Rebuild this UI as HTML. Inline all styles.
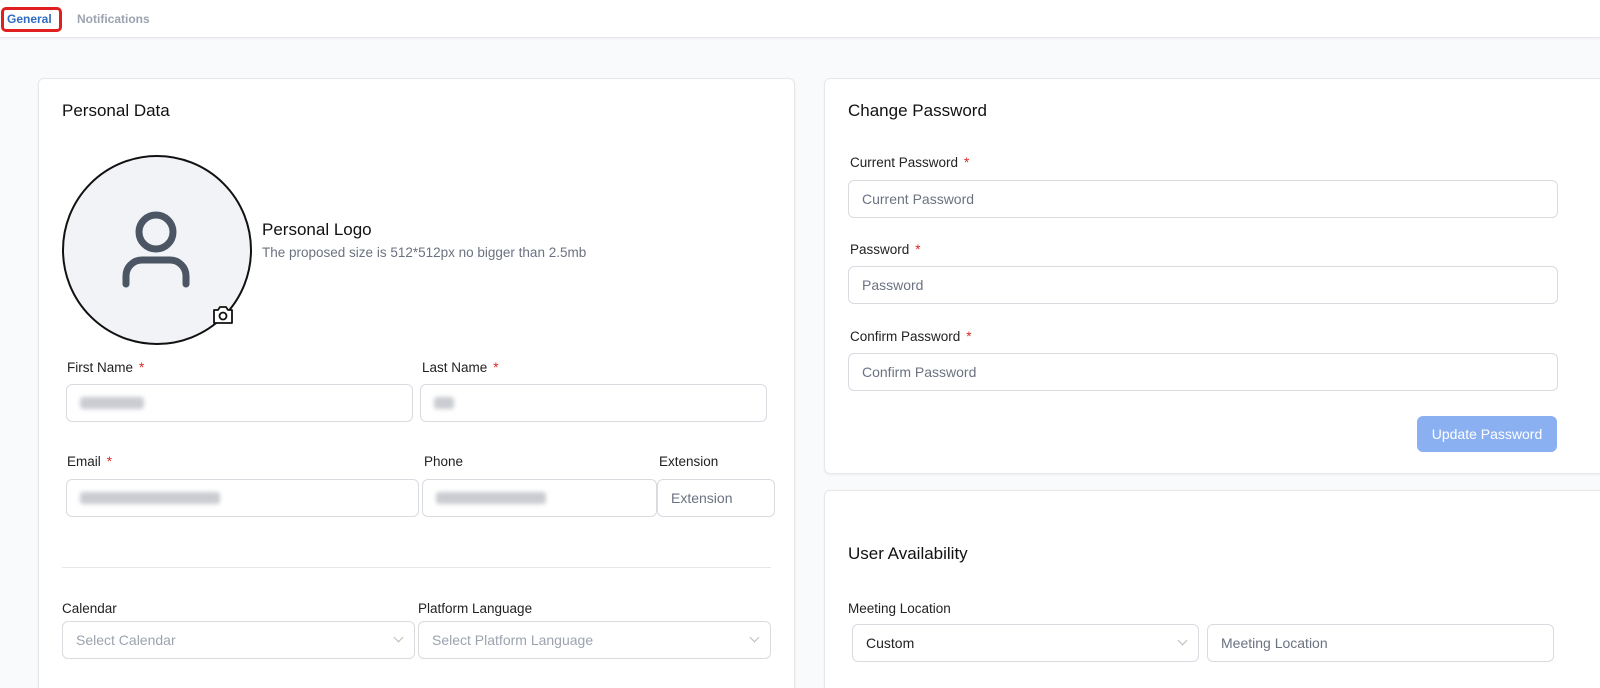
<!DOCTYPE html>
<html style="overflow:hidden;height:688px"><head><style>
*{box-sizing:border-box;margin:0;padding:0}
body{width:1600px;height:688px;overflow:hidden;background:#f9fafb;font-family:"Liberation Sans",sans-serif;position:relative;color:#111}
.a{position:absolute}
.hdr{left:0;top:0;width:1600px;height:38px;background:#fff;border-bottom:1px solid #e5e7eb;box-shadow:0 1px 2px rgba(0,0,0,.05)}
.card{background:#fff;border:1px solid #e5e7eb;border-radius:6px;box-shadow:0 1px 2px rgba(0,0,0,.05)}
.inp{border:1px solid #d8dbe0;border-radius:6px;background:#fff;font-size:14px;color:#6b7280;padding-left:13px;display:flex;align-items:center}
.lbl{font-size:13.5px;color:#222}
.st{color:#dc2626;margin-left:6px}
.t{font-size:17px;color:#111}
.blur{background:#c9ccd1;filter:blur(2px);height:12px;border-radius:3px}
.ph{color:#9ca3af}
.chev{position:absolute;right:12px;top:12px;width:7px;height:7px;border-right:1px solid #bbb;border-bottom:1px solid #bbb;transform:rotate(45deg)}
</style></head><body>
<div class="a hdr"></div>
<div class="a" style="left:1px;top:7px;width:61px;height:25px;border:3px solid #e02020;border-radius:5px"></div>
<div class="a" style="left:7px;top:12px;font-size:12px;font-weight:bold;color:#2f6cc0">General</div>
<div class="a" style="left:77px;top:12px;font-size:12px;font-weight:bold;color:#9ca3af">Notifications</div>

<div class="a card" style="left:38px;top:78px;width:757px;height:620px;border-bottom:none"></div>
<div class="a t" style="left:62px;top:101px">Personal Data</div>
<div class="a" style="left:62px;top:155px;width:190px;height:190px;border:2px solid #111;border-radius:50%;background:#f2f3f6"></div>
<svg class="a" style="left:118px;top:208px" width="76" height="82" viewBox="0 0 76 82"><circle cx="38" cy="24" r="17" fill="none" stroke="#4b5563" stroke-width="7"/><path d="M8 76V68a16 16 0 0 1 16-16h28a16 16 0 0 1 16 16v8" fill="none" stroke="#4b5563" stroke-width="7" stroke-linecap="round"/></svg>
<svg class="a" style="left:211px;top:304px" width="24" height="22" viewBox="0 0 24 22"><path d="M3 6h4l2-3h6l2 3h4v13H3z" fill="#fff" stroke="#111" stroke-width="1.8" stroke-linejoin="round"/><circle cx="12" cy="12" r="3.5" fill="none" stroke="#111" stroke-width="1.8"/></svg>
<div class="a" style="left:262px;top:220px;font-size:17px">Personal Logo</div>
<div class="a" style="left:262px;top:245px;font-size:13.5px;color:#6b7280">The proposed size is 512*512px no bigger than 2.5mb</div>

<div class="a lbl" style="left:67px;top:360px">First Name<span class="st">*</span></div>
<div class="a lbl" style="left:422px;top:360px">Last Name<span class="st">*</span></div>
<div class="a inp" style="left:66px;top:384px;width:347px;height:38px"><div class="blur" style="width:64px"></div></div>
<div class="a inp" style="left:420px;top:384px;width:347px;height:38px"><div class="blur" style="width:20px"></div></div>

<div class="a lbl" style="left:67px;top:454px">Email<span class="st">*</span></div>
<div class="a lbl" style="left:424px;top:454px">Phone</div>
<div class="a lbl" style="left:659px;top:454px">Extension</div>
<div class="a inp" style="left:66px;top:479px;width:353px;height:38px"><div class="blur" style="width:140px"></div></div>
<div class="a inp" style="left:422px;top:479px;width:235px;height:38px"><div class="blur" style="width:110px"></div></div>
<div class="a inp" style="left:657px;top:479px;width:118px;height:38px">Extension</div>
<div class="a" style="left:62px;top:567px;width:709px;height:1px;background:#e5e7eb"></div>

<div class="a lbl" style="left:62px;top:601px">Calendar</div>
<div class="a lbl" style="left:418px;top:601px">Platform Language</div>
<div class="a inp ph" style="left:62px;top:621px;width:353px;height:38px">Select Calendar<span class="chev"></span></div>
<div class="a inp ph" style="left:418px;top:621px;width:353px;height:38px">Select Platform Language<span class="chev"></span></div>

<div class="a card" style="left:824px;top:78px;width:800px;height:396px"></div>
<div class="a t" style="left:848px;top:101px">Change Password</div>
<div class="a lbl" style="left:850px;top:155px">Current Password<span class="st">*</span></div>
<div class="a inp" style="left:848px;top:180px;width:710px;height:38px">Current Password</div>
<div class="a lbl" style="left:850px;top:242px">Password<span class="st">*</span></div>
<div class="a inp" style="left:848px;top:266px;width:710px;height:38px">Password</div>
<div class="a lbl" style="left:850px;top:329px">Confirm Password<span class="st">*</span></div>
<div class="a inp" style="left:848px;top:353px;width:710px;height:38px">Confirm Password</div>
<div class="a" style="left:1417px;top:416px;width:140px;height:36px;background:#8bb0f2;border-radius:6px;color:#fff;font-size:14px;display:flex;align-items:center;justify-content:center">Update Password</div>

<div class="a card" style="left:824px;top:490px;width:800px;height:210px;border-bottom:none"></div>
<div class="a t" style="left:848px;top:544px">User Availability</div>
<div class="a lbl" style="left:848px;top:601px">Meeting Location</div>
<div class="a inp" style="left:852px;top:624px;width:347px;height:38px;color:#222">Custom<span class="chev"></span></div>
<div class="a inp" style="left:1207px;top:624px;width:347px;height:38px">Meeting Location</div>
</body></html>
